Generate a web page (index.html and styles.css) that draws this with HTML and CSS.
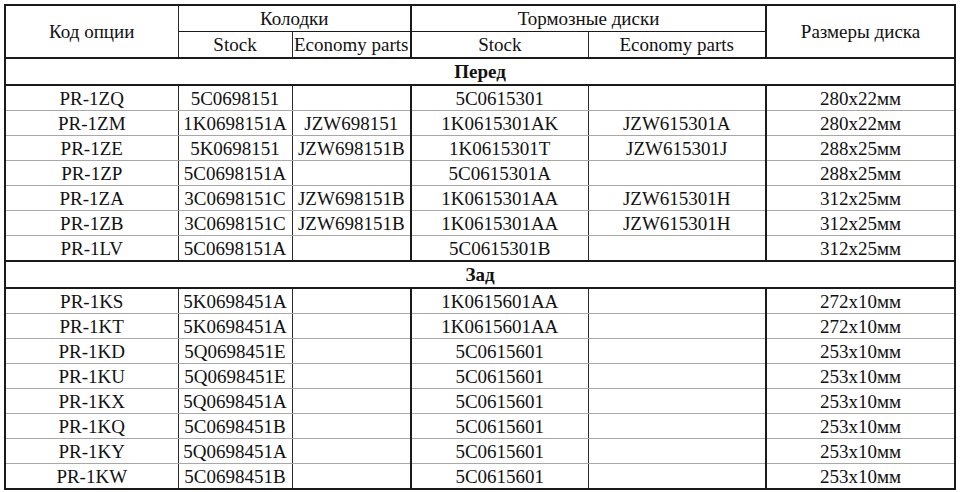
FILE: index.html
```html
<!DOCTYPE html>
<html lang="ru">
<head>
<meta charset="utf-8">
<title>Тормоза</title>
<link rel="stylesheet" href="styles.css">
</head>
<body>
<div class="sheet">
<table class="parts">
<colgroup>
<col class="c-code"><col class="c-pad"><col class="c-pad-eco"><col class="c-disc"><col class="c-disc-eco"><col class="c-size">
</colgroup>
<thead>
<tr class="head-top">
<th rowspan="2">Код опции</th>
<th colspan="2" class="grp">Колодки</th>
<th colspan="2" class="grp">Тормозные диски</th>
<th rowspan="2">Размеры диска</th>
</tr>
<tr class="head-sub">
<th>Stock</th><th class="grp">Economy parts</th>
<th>Stock</th><th class="grp">Economy parts</th>
</tr>
</thead>
<tbody>
<tr class="section"><td colspan="6">Перед</td></tr>
<tr><td>PR-1ZQ</td><td>5C0698151</td><td class="grp"></td><td>5C0615301</td><td class="grp"></td><td>280x22мм</td></tr>
<tr><td>PR-1ZM</td><td>1K0698151A</td><td class="grp">JZW698151</td><td>1K0615301AK</td><td class="grp">JZW615301A</td><td>280x22мм</td></tr>
<tr><td>PR-1ZE</td><td>5K0698151</td><td class="grp">JZW698151B</td><td>1K0615301T</td><td class="grp">JZW615301J</td><td>288x25мм</td></tr>
<tr><td>PR-1ZP</td><td>5C0698151A</td><td class="grp"></td><td>5C0615301A</td><td class="grp"></td><td>288x25мм</td></tr>
<tr><td>PR-1ZA</td><td>3C0698151C</td><td class="grp">JZW698151B</td><td>1K0615301AA</td><td class="grp">JZW615301H</td><td>312x25мм</td></tr>
<tr><td>PR-1ZB</td><td>3C0698151C</td><td class="grp">JZW698151B</td><td>1K0615301AA</td><td class="grp">JZW615301H</td><td>312x25мм</td></tr>
<tr><td>PR-1LV</td><td>5C0698151A</td><td class="grp"></td><td>5C0615301B</td><td class="grp"></td><td>312x25мм</td></tr>
<tr class="section"><td colspan="6">Зад</td></tr>
<tr><td>PR-1KS</td><td>5K0698451A</td><td class="grp"></td><td>1K0615601AA</td><td class="grp"></td><td>272x10мм</td></tr>
<tr><td>PR-1KT</td><td>5K0698451A</td><td class="grp"></td><td>1K0615601AA</td><td class="grp"></td><td>272x10мм</td></tr>
<tr><td>PR-1KD</td><td>5Q0698451E</td><td class="grp"></td><td>5C0615601</td><td class="grp"></td><td>253x10мм</td></tr>
<tr><td>PR-1KU</td><td>5Q0698451E</td><td class="grp"></td><td>5C0615601</td><td class="grp"></td><td>253x10мм</td></tr>
<tr><td>PR-1KX</td><td>5Q0698451A</td><td class="grp"></td><td>5C0615601</td><td class="grp"></td><td>253x10мм</td></tr>
<tr><td>PR-1KQ</td><td>5C0698451B</td><td class="grp"></td><td>5C0615601</td><td class="grp"></td><td>253x10мм</td></tr>
<tr><td>PR-1KY</td><td>5Q0698451A</td><td class="grp"></td><td>5C0615601</td><td class="grp"></td><td>253x10мм</td></tr>
<tr><td>PR-1KW</td><td>5C0698451B</td><td class="grp"></td><td>5C0615601</td><td class="grp"></td><td>253x10мм</td></tr>
</tbody>
</table>
</div>
</body>
</html>
```
FILE: styles.css
```css
html, body {
  margin: 0;
  padding: 0;
  background: #ffffff;
}

.sheet {
  padding: 4px 0 0 4px;
}

.parts {
  border-collapse: collapse;
  table-layout: fixed;
  width: 950px;
  font-family: "Liberation Serif", "Times New Roman", serif;
  font-size: 19px;
  color: #111111;
  border: 2px solid #1a1a1a;
}

.c-code { width: 173px; }
.c-pad { width: 114px; }
.c-pad-eco { width: 119px; }
.c-disc { width: 177px; }
.c-disc-eco { width: 178px; }
.c-size { width: 189px; }

.parts th,
.parts td {
  padding: 0;
  text-align: center;
  white-space: nowrap;
  overflow: hidden;
  line-height: 21px;
  border-left: 1px solid #2a2a2a;
  border-bottom: 1px solid #a8a8a8;
}

.parts th {
  font-weight: normal;
  height: 25px;
  border-bottom: 2px solid #1a1a1a;
}

.parts .head-top th.grp {
  border-bottom: 1px solid #1a1a1a;
}

.parts .grp + td,
.parts .grp + th {
  border-left: 2px solid #1a1a1a;
}

.parts .head-top th:last-child {
  border-left: 2px solid #1a1a1a;
}

.parts td {
  height: 24px;
}

.parts .section td {
  font-weight: bold;
  height: 25px;
  border-bottom: 2px solid #1a1a1a;
}

.parts tr:has(+ .section) td {
  border-bottom: 2px solid #1a1a1a;
}
```
